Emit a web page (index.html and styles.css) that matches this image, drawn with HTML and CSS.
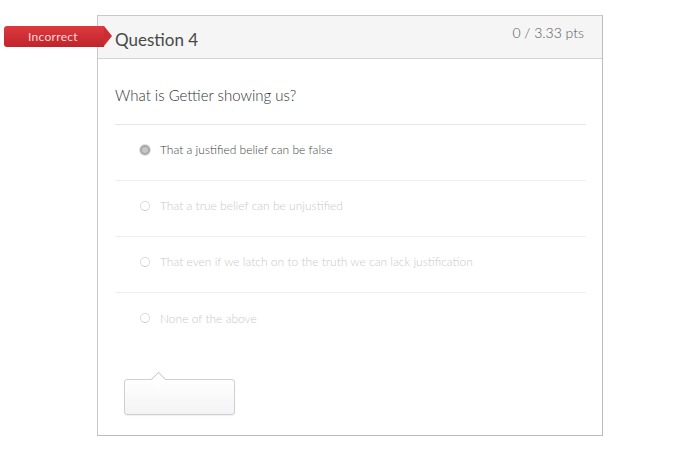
FILE: index.html
```html
<!DOCTYPE html>
<html>
<head>
<meta charset="utf-8">
<link rel="stylesheet" href="styles.css">
</head>
<body>
<div class="page">
  <div class="card">
    <div class="badge">Incorrect</div>
    <div class="header">
      <div class="title">Question 4</div>
      <div class="pts">0 / 3.33 pts</div>
    </div>
    <div class="body">
      <div class="question">What is Gettier showing us?</div>
      <div class="answers">
        <div class="answer selected"><span class="radio"></span><span>That a justified belief can be false</span></div>
        <div class="answer"><span class="radio"></span><span>That a true belief can be unjustified</span></div>
        <div class="answer"><span class="radio"></span><span>That even if we latch on to the truth we can lack justification</span></div>
        <div class="answer last"><span class="radio"></span><span>None of the above</span></div>
      </div>
      <div class="comment"></div>
    </div>
  </div>
</div>
</body>
</html>
```

FILE: styles.css
```css
html, body {
  margin: 0;
  padding: 0;
  background: #fff;
  font-family: Lato, "Liberation Sans", sans-serif;
}
.page {
  padding: 15px 0 0 97px;
}
.card {
  position: relative;
  width: 506px;
  height: 421px;
  border: 1px solid #c8c8c8;
  border-right-color: #bcbcbc;
  border-bottom-color: #bcbcbc;
  box-sizing: border-box;
  background: #fff;
}
.badge {
  position: absolute;
  left: -94px;
  top: 10px;
  width: 100px;
  height: 21px;
  background: linear-gradient(#dc3a3f, #c0242a);
  color: #f6dada;
  font-size: 12px;
  line-height: 21px;
  padding-left: 24px;
  box-sizing: border-box;
  border-radius: 3px 0 0 3px;
  letter-spacing: 0.3px;
}
.badge::after {
  content: "";
  position: absolute;
  right: -8px;
  top: 0;
  border-left: 8px solid #cc2d32;
  border-top: 10.5px solid transparent;
  border-bottom: 10.5px solid transparent;
}
.header {
  height: 42px;
  background: #f5f5f5;
  border-bottom: 1px solid #d4d4d4;
  display: flex;
  justify-content: space-between;
  padding: 0 18px 0 17px;
}
.title {
  font-size: 17px;
  color: #484848;
  padding-top: 13px;
}
.pts {
  font-size: 14px;
  font-weight: 300;
  color: #555;
  padding-top: 8px;
}
.body {
  padding: 0 16px 0 17px;
}
.question {
  font-size: 15px;
  font-weight: 300;
  color: #333;
  padding: 27px 0 20px;
  border-bottom: 1px solid #e6e6e6;
}
.answer {
  display: flex;
  align-items: center;
  height: 56px;
  border-bottom: 1px solid #eeeeee;
  box-sizing: border-box;
  padding-left: 25px;
  padding-bottom: 6px;
  font-size: 12px;
  font-weight: 300;
  color: #c9c9c9;
}
.answer.last {
  border-bottom: none;
}
.answer.selected {
  color: #444;
}
.radio {
  width: 8px;
  height: 8px;
  border-radius: 50%;
  border: 1px solid #dcdcdc;
  border-bottom-color: #c8c8c8;
  margin-right: 10px;
  box-sizing: content-box;
  background: #fff;
}
.selected .radio {
  background: #c6c6c6;
  border: 2px solid #a8a8a8;
  width: 6px;
  height: 6px;
  box-shadow: 0 0 0 1px #e0e0e0;
}
.comment {
  position: relative;
  margin: 30px 0 0 9px;
  width: 111px;
  height: 36px;
  border: 1px solid #cfcfcf;
  border-radius: 3px;
  background: linear-gradient(#ffffff, #f3f3f5);
  box-sizing: border-box;
  box-shadow: 0 1px 1px rgba(0,0,0,0.06);
}
.comment::before {
  content: "";
  position: absolute;
  left: 28px;
  top: -6px;
  width: 10px;
  height: 10px;
  background: #fff;
  border-left: 1px solid #cfcfcf;
  border-top: 1px solid #cfcfcf;
  transform: rotate(45deg);
}
```
